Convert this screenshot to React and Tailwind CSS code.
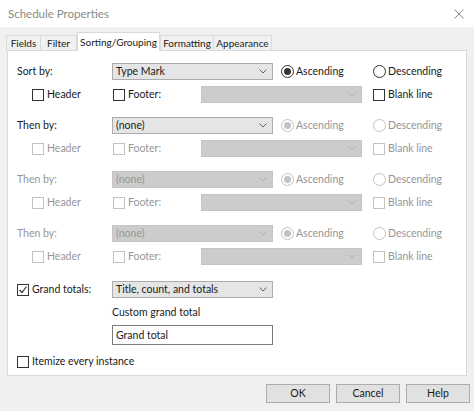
import React from "react";

const Chevron = ({ disabled }) => (
  <svg width="8" height="5" viewBox="0 0 8 5" className="shrink-0">
    <path
      d="M0.5 0.5 L4 4 L7.5 0.5"
      fill="none"
      stroke={disabled ? "#b0b0b0" : "#606060"}
      strokeWidth="1"
    />
  </svg>
);

const Select = ({ value, width, disabled }) => (
  <div
    className={
      "h-[17px] flex items-center justify-between pl-[3px] pr-[5px] border " +
      (disabled
        ? "bg-[#cccccc] border-[#c4c4c4] text-[#969696]"
        : "bg-[#e5e5e5] border-[#acacac] text-[#1a1a1a]")
    }
    style={{ width }}
  >
    <span>{value}</span>
    <Chevron disabled={disabled} />
  </div>
);

const Checkbox = ({ label, checked, disabled, className = "" }) => (
  <div className={"flex items-center " + className}>
    <div
      className={
        "w-[12px] h-[12px] border bg-white flex items-center justify-center " +
        (disabled ? "border-[#c2c2c2]" : "border-[#333333]")
      }
    >
      {checked && (
        <svg width="10" height="10" viewBox="0 0 10 10">
          <path d="M1.5 5 L4 7.5 L8.5 1.5" fill="none" stroke="#333" strokeWidth="1.2" />
        </svg>
      )}
    </div>
    <span className={"ml-[3px] " + (disabled ? "text-[#969696]" : "text-[#1a1a1a]")}>
      {label}
    </span>
  </div>
);

const Radio = ({ label, checked, disabled, className = "" }) => (
  <div className={"flex items-center " + className}>
    <div
      className={
        "w-[13px] h-[13px] rounded-full border bg-white flex items-center justify-center " +
        (disabled ? "border-[#c2c2c2]" : "border-[#333333]")
      }
    >
      {checked && (
        <div
          className={
            "w-[7px] h-[7px] rounded-full " + (disabled ? "bg-[#c2c2c2]" : "bg-[#333333]")
          }
        />
      )}
    </div>
    <span className={"ml-[2px] " + (disabled ? "text-[#969696]" : "text-[#1a1a1a]")}>
      {label}
    </span>
  </div>
);

// one sort level: main row + header/footer row
const SortGroup = ({ label, value, labelOff, selectOff, optsOff, className = "" }) => (
  <div className={"flex flex-col gap-[6px] " + className}>
    <div className="flex items-center h-[17px]">
      <span className={"w-[95px] " + (labelOff ? "text-[#969696]" : "text-[#1a1a1a]")}>
        {label}
      </span>
      <Select value={value} width={161} disabled={selectOff} />
      <Radio label="Ascending" checked disabled={optsOff} className="w-[92px] ml-[8px]" />
      <Radio label="Descending" disabled={optsOff} />
    </div>
    <div className="flex items-center h-[17px]">
      <Checkbox label="Header" disabled={optsOff} className="w-[81px] ml-[15px]" />
      <Checkbox label="Footer:" disabled={optsOff} className="w-[88px]" />
      <Select value="" width={161} disabled />
      <Checkbox label="Blank line" disabled={optsOff} className="ml-[11px]" />
    </div>
  </div>
);

const Button = ({ children }) => (
  <div className="w-[64px] h-[19px] bg-[#e1e1e1] border border-[#adadad] flex items-center justify-center text-[#1a1a1a]">
    {children}
  </div>
);

export default function App() {
  const tabs = [
    { name: "Fields", w: "w-[35px]" },
    { name: "Filter", w: "w-[37px] -ml-[1px]" },
    { name: "Sorting/Grouping", w: "w-[83px]", active: true },
    { name: "Formatting", w: "w-[54px]" },
    { name: "Appearance", w: "w-[59px] -ml-[1px]" },
  ];

  return (
    <div
      className="w-[474px] h-[411px] bg-[#f0f0f0] flex flex-col overflow-hidden text-[10.5px] leading-none"
      style={{ fontFamily: 'Lato, "Noto Sans", sans-serif' }}
    >
      {/* Title bar */}
      <div className="h-[27px] bg-white flex items-center justify-between pl-[8px] pr-[10px]">
        <span className="text-[11.5px] text-[#8a8a8a]">Schedule Properties</span>
        <svg width="10" height="10" viewBox="0 0 10 10">
          <path d="M0.5 0.5 L9.5 9.5 M9.5 0.5 L0.5 9.5" stroke="#777" strokeWidth="0.9" />
        </svg>
      </div>

      {/* Tabs */}
      <div className="mt-[5px] h-[18px] flex items-end pl-[6px] text-[10px]">
        {tabs.map((t) =>
          t.active ? (
            <div
              key={t.name}
              className={
                t.w +
                " h-[19px] -mb-[1px] bg-white border border-b-0 border-[#d9d9d9] flex items-center justify-center text-[#1a1a1a] z-10"
              }
            >
              {t.name}
            </div>
          ) : (
            <div
              key={t.name}
              className={
                t.w +
                " h-[15px] bg-[#f0f0f0] border border-b-0 border-[#d9d9d9] flex items-center justify-center text-[#1a1a1a]"
              }
            >
              {t.name}
            </div>
          )
        )}
      </div>

      {/* Tab panel */}
      <div className="mx-[7px] h-[326px] bg-white border border-[#d9d9d9] pt-[12px] pl-[9px] flex flex-col">
        <SortGroup label="Sort by:" value="Type Mark" />
        <SortGroup label="Then by:" value="(none)" optsOff className="mt-[14px]" />
        <SortGroup label="Then by:" value="(none)" labelOff selectOff optsOff className="mt-[14px]" />
        <SortGroup label="Then by:" value="(none)" labelOff selectOff optsOff className="mt-[14px]" />

        <div className="mt-[16px] flex items-center h-[17px]">
          <Checkbox label="Grand totals:" checked className="w-[95px]" />
          <Select value="Title, count, and totals" width={161} />
        </div>
        <div className="mt-[8px] ml-[95px] h-[13px] flex items-center text-[#1a1a1a]">
          Custom grand total
        </div>
        <div className="mt-[6px] ml-[95px] w-[161px] h-[20px] border border-[#7a7a7a] flex items-center pl-[3px] text-[#1a1a1a]">
          Grand total
        </div>
        <div className="mt-[8px] h-[17px] flex items-center">
          <Checkbox label="Itemize every instance" />
        </div>
      </div>

      {/* Buttons */}
      <div className="mt-[8px] flex justify-end gap-[6px] pr-[4px]">
        <Button>OK</Button>
        <Button>Cancel</Button>
        <Button>Help</Button>
      </div>
    </div>
  );
}
